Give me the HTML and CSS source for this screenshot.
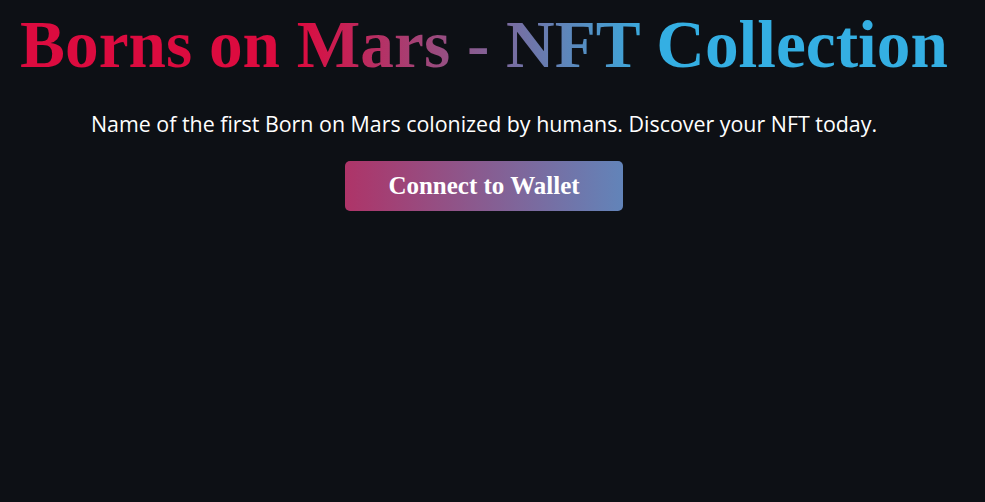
FILE: index.html
```html
<!DOCTYPE html>
<html lang="en">
<head>
<meta charset="utf-8">
<title>Borns on Mars - NFT Collection</title>
<link rel="stylesheet" href="styles.css">
</head>
<body>
<main class="hero">
  <h1 class="title">Borns on Mars - NFT Collection</h1>
  <p class="subtitle">Name of the first Born on Mars colonized by humans. Discover your NFT today.</p>
  <button class="connect">Connect to Wallet</button>
</main>
</body>
</html>
```

FILE: styles.css
```css
html, body {
  background: #0d1015;
}
body {
  margin: 0;
  padding: 6px 25px 8px 8px;
}
.hero {
  display: flex;
  flex-direction: column;
  align-items: center;
}
.title {
  align-self: stretch;
  margin: 0;
  font-family: "Liberation Serif", serif;
  font-weight: bold;
  font-size: 67.3px;
  line-height: normal;
  text-align: center;
  background: linear-gradient(90deg, #dc0b3f 30.5%, #34afe3 68%);
  -webkit-background-clip: text;
  background-clip: text;
  color: transparent;
}
.subtitle {
  margin: 25px 0 0;
  font-family: "Open Sans", sans-serif;
  font-size: 21.4px;
  line-height: normal;
  color: #ffffff;
}
.connect {
  margin-top: 23px;
  width: 278px;
  height: 50px;
  padding: 0;
  border: none;
  border-radius: 5px;
  background: linear-gradient(90deg, #ae3468, #6284b9);
  color: #ffffff;
  font-family: "Liberation Serif", serif;
  font-weight: bold;
  font-size: 25px;
  cursor: pointer;
}
```
